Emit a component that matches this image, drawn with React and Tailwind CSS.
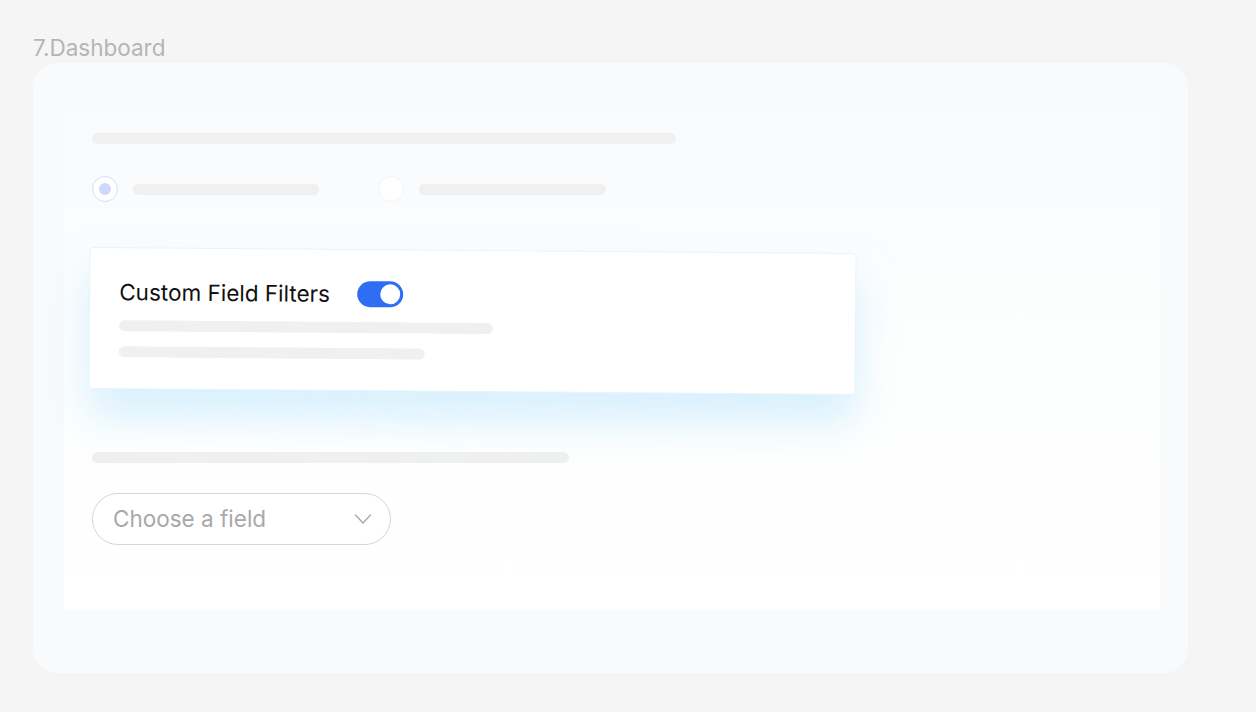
import React from 'react';

function Bar({ className }) {
  return <div className={`h-[11px] rounded-full bg-[#f0f0f0] ${className}`} />;
}

export default function App() {
  return (
    <div className="min-h-screen bg-[#f5f5f5] pl-[33px] pt-[34px]" style={{ fontFamily: 'Inter, "Noto Sans", sans-serif' }}>
      <div className="text-[22.5px] leading-[28px] text-[#b5b5b5]">7.Dashboard</div>

      <div className="w-[1155px] h-[610px] mt-[1px] rounded-[24px] bg-[#f8fafc] pl-[31px] pr-[28px] pt-[27px] pb-[63px]">
        <div className="h-full bg-gradient-to-b from-[#f8fafc] via-[#fdfefe] to-white pl-[28px] pt-[43px]">
          <Bar className="w-[584px]" />

          <div className="flex items-center mt-[32px] h-[26px]">
            <div className="w-[26px] h-[26px] rounded-full border-[1.5px] border-[#d3defb] bg-white flex items-center justify-center">
              <div className="w-[12px] h-[12px] rounded-full bg-[#cbdafb]" />
            </div>
            <Bar className="w-[186px] ml-[15px]" />
            <div className="w-[26px] h-[26px] rounded-full border border-[#f1f3f5] bg-white ml-[59px]" />
            <Bar className="w-[187px] ml-[15px]" />
          </div>

          <div className="relative mt-[48px] -ml-[3px] w-[767px] h-[142px] rotate-[0.45deg] rounded-[4px] bg-white border border-[#e6f4fb] shadow-[0_28px_40px_rgba(186,230,253,0.55)] pl-[29px] pt-[30px]">
            <div className="flex items-center h-[28px]">
              <span className="text-[22.5px] text-[#111111]">Custom Field Filters</span>
              <div className="ml-[27px] w-[46px] h-[26px] rounded-full bg-[#2f6df5] flex items-center justify-end pr-[3px]">
                <div className="w-[20px] h-[20px] rounded-full bg-white" />
              </div>
            </div>
            <Bar className="w-[374px] mt-[14px]" />
            <Bar className="w-[306px] mt-[15px]" />
          </div>

          <Bar className="w-[477px] mt-[60px]" />

          <div className="mt-[30px] w-[299px] h-[52px] rounded-full border border-[#d6d6d6] bg-white flex items-center justify-between pl-[20px] pr-[18px]">
            <span className="text-[22.5px] text-[#a8a8a8]">Choose a field</span>
            <svg width="18" height="12" viewBox="0 0 18 12" fill="none">
              <path d="M1.5 2 L9 10 L16.5 2" stroke="#a8a8a8" strokeWidth="1.4" strokeLinecap="round" strokeLinejoin="round" />
            </svg>
          </div>
        </div>
      </div>
    </div>
  );
}
